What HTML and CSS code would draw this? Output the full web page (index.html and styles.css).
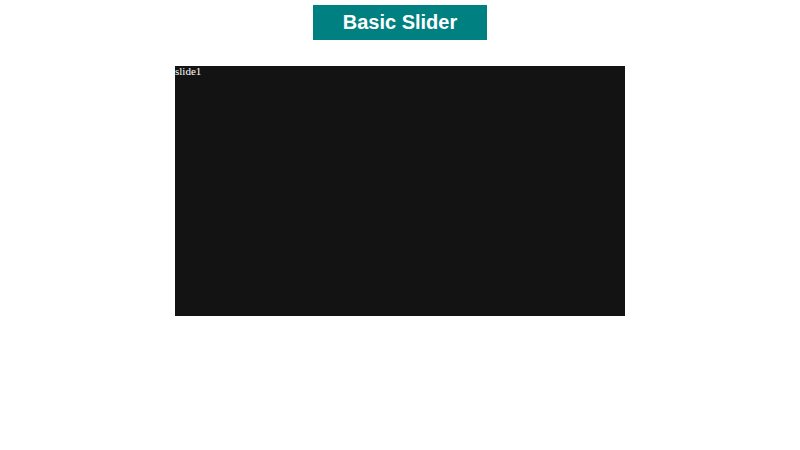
FILE: index.html
```html
<!DOCTYPE html>
<html lang="en">
<head>
  <meta charset="UTF-8">
  <meta name="viewport" content="width=device-width, initial-scale=1.0">
  <title>Basic Slider</title>
  <link rel="stylesheet" href="styles.css">
</head>
<body>
  <h1 class="title">Basic Slider</h1>

  <div class="slider">
    <div class="slide">slide1</div>
  </div>
</body>
</html>
```

FILE: styles.css
```css
body {
  margin: 0;
  padding-top: 5px;
  background: #fff;
  display: flex;
  flex-direction: column;
  align-items: center;
}

.title {
  margin: 0 0 26px;
  padding: 5px 30px;
  background: #008080;
  color: #fff;
  font-family: "Liberation Sans", Arial, sans-serif;
  font-size: 20px;
  line-height: 25px;
  white-space: nowrap;
}

.slider {
  width: 450px;
  height: 250px;
  background: #131313;
  overflow: hidden;
}

.slide {
  color: #fff;
  font-family: "Liberation Serif", "Times New Roman", serif;
  font-size: 11px;
  line-height: 11px;
}
```
